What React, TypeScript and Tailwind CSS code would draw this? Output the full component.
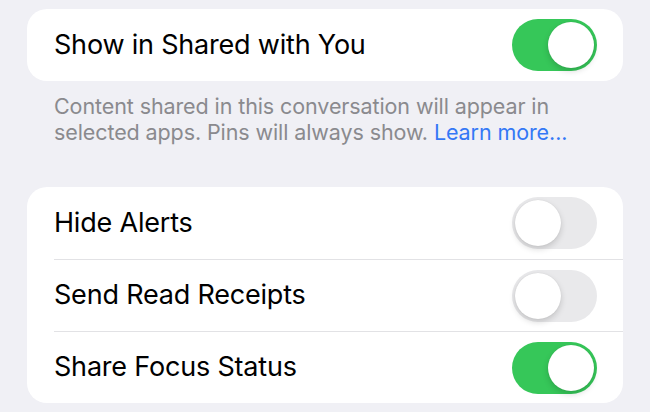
import { useState } from "react";

type Row = { label: string; on: boolean };

const ROWS: Row[] = [
  { label: "Hide Alerts", on: false },
  { label: "Send Read Receipts", on: false },
  { label: "Share Focus Status", on: true },
];

function Toggle({ on, onChange }: { on: boolean; onChange: () => void }) {
  return (
    <button
      onClick={onChange}
      className={`relative flex h-[52px] w-[85px] shrink-0 items-center rounded-full p-[3px] transition-colors ${
        on ? "justify-end bg-[#36c759]" : "justify-start bg-[#e9e9eb]"
      }`}
    >
      <span className="block h-[46px] w-[46px] rounded-full bg-white shadow-[0_3px_6px_rgba(0,0,0,0.16),0_0_1px_rgba(0,0,0,0.12)]" />
    </button>
  );
}

export default function App() {
  const [shared, setShared] = useState(true);
  const [rows, setRows] = useState(ROWS);

  const flip = (i: number) =>
    setRows((r) => r.map((x, j) => (j === i ? { ...x, on: !x.on } : x)));

  return (
    <div
      className="h-[412px] w-[650px] overflow-hidden bg-[#f0f0f5] px-[27px] pt-[9px] text-black"
      style={{ fontFamily: "Inter, 'Noto Sans', sans-serif" }}
    >
      {/* Shared with You */}
      <div className="flex h-[72px] items-center justify-between rounded-[20px] bg-white pl-[27px] pr-[26px]">
        <span className="text-[27px] tracking-[-0.2px]">Show in Shared with You</span>
        <Toggle on={shared} onChange={() => setShared(!shared)} />
      </div>

      <p className="mt-[12px] pl-[27px] pr-[20px] text-[21.5px] leading-[26px] text-[#8a8a8e] tracking-[-0.1px]">
        Content shared in this conversation will appear in
        <br />
        selected apps. Pins will always show.{" "}
        <span className="text-[#3478f6]">Learn more...</span>
      </p>

      {/* Conversation options */}
      <div className="mt-[42px] overflow-hidden rounded-[20px] bg-white">
        {rows.map((r, i) => (
          <div key={r.label} className="pl-[27px]">
            <div
              className={`flex h-[72px] items-center justify-between pr-[26px] ${
                i > 0 ? "border-t border-[#e2e2e5]" : ""
              }`}
            >
              <span className="text-[27px] tracking-[-0.2px]">{r.label}</span>
              <Toggle on={r.on} onChange={() => flip(i)} />
            </div>
          </div>
        ))}
      </div>
    </div>
  );
}
